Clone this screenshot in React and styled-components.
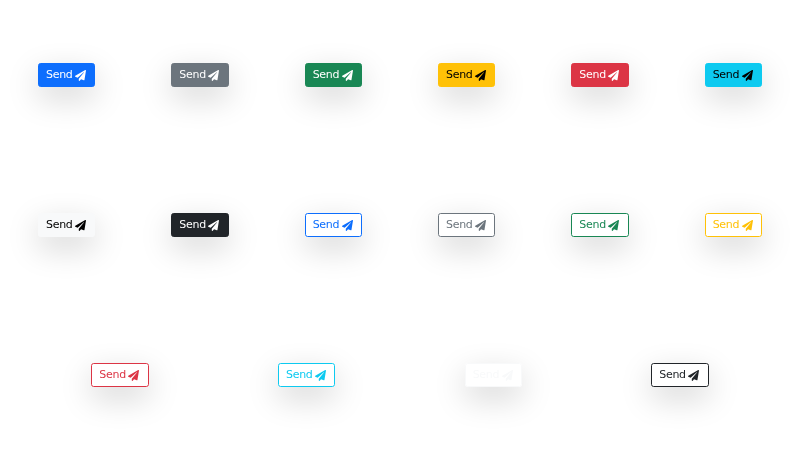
import React from 'react'
import styled, { createGlobalStyle } from 'styled-components'
import { FaPaperPlane } from 'react-icons/fa'

const GlobalStyle = createGlobalStyle`
  html, body {
    margin: 0;
    padding: 0;
    background: #fff;
  }
`

const Page = styled.div`
  width: 800px;
  height: 450px;
  overflow: hidden;
  font-family: "DejaVu Sans", sans-serif;
  text-rendering: geometricPrecision;
`

const Row = styled.div`
  height: 150px;
  display: flex;
  align-items: center;
  justify-content: ${(p) => (p.$evenly ? 'space-evenly' : 'flex-start')};
`

const Col = styled.div`
  width: 133.33px;
  display: flex;
  justify-content: center;
`

const SendButton = styled.button`
  display: inline-flex;
  align-items: center;
  gap: 2.6px;
  box-sizing: border-box;
  width: 57.33px;
  height: 24px;
  padding: 0 0 0 7px;
  font-family: inherit;
  font-size: 11px;
  letter-spacing: -0.3px;
  line-height: 16px;
  white-space: nowrap;
  color: ${(p) => p.$color};
  background: ${(p) => p.$bg};
  border: 1px solid ${(p) => p.$border};
  border-radius: 2.67px;
  box-shadow: 0 10.67px 32px rgba(0, 0, 0, 0.175);
  filter: blur(0.5px);
  svg {
    width: 11px;
    height: 11px;
  }
`

const solid = (bg, color = '#fff') => ({ bg, color, border: bg })
const outline = (color) => ({ bg: 'transparent', color, border: color })

const rows = [
  [solid('#0d6efd'), solid('#6c757d'), solid('#198754'), solid('#ffc107', '#000'), solid('#dc3545'), solid('#0dcaf0', '#000')],
  [solid('#f8f9fa', '#000'), solid('#212529'), outline('#0d6efd'), outline('#6c757d'), outline('#198754'), outline('#ffc107')],
  [outline('#dc3545'), outline('#0dcaf0'), outline('#f8f9fa'), outline('#212529')],
]

const App = () => (
  <Page>
    <GlobalStyle />
    {rows.map((row, r) => (
      <Row key={r} $evenly={row.length < 6}>
        {row.map((b, i) => (
          <Col key={i}>
            <SendButton $bg={b.bg} $color={b.color} $border={b.border}>
              Send
              <FaPaperPlane />
            </SendButton>
          </Col>
        ))}
      </Row>
    ))}
  </Page>
)

export default App
